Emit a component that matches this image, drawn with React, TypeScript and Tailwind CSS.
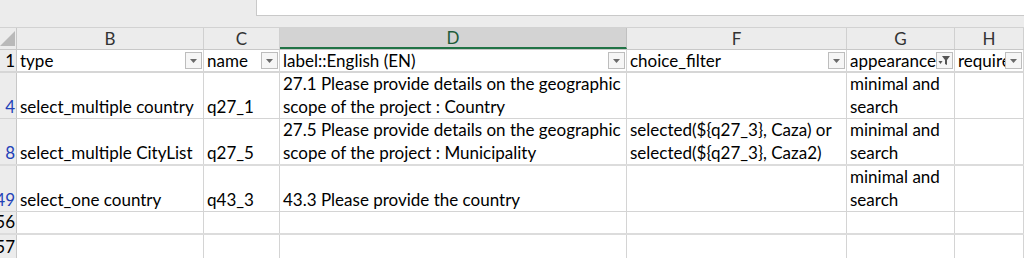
import React from 'react';

// Excel-like sheet with an autofilter header row

const COLS = 'grid grid-cols-[17px_187px_76px_347px_220px_108px_1fr]';

const letters = ['B', 'C', 'D', 'F', 'G', 'H'];

const FilterButton = ({ active = false }: { active?: boolean }) => (
  <span className="absolute right-[1px] bottom-[2px] w-[17px] h-[17px] bg-[#f6f6f6] border border-[#bdbdbd] flex items-center justify-center">
    {active ? (
      <svg width="13" height="11" viewBox="0 0 13 11">
        <path d="M4 1h8L9 5v5L7 9V5z" fill="#555" />
        <path d="M0.5 6h4L2.5 9z" fill="#555" />
      </svg>
    ) : (
      <svg width="7" height="4" viewBox="0 0 7 4">
        <path d="M0 0h7L3.5 4z" fill="#6a6a6a" />
      </svg>
    )}
  </span>
);

type Row = {
  num: string;
  blue?: boolean;
  h: string;
  line: string;
  cells: string[][];
};

const rows: Row[] = [
  {
    num: '4',
    blue: true,
    h: 'h-[46px]',
    line: 'border-b border-[#d4d4d4]',
    cells: [
      ['select_multiple country'],
      ['q27_1'],
      ['27.1 Please provide details on the geographic', 'scope of the project : Country'],
      [],
      ['minimal and', 'search'],
      [],
    ],
  },
  {
    num: '8',
    blue: true,
    h: 'h-[47px]',
    line: 'border-b-2 border-[#dcdcdc]',
    cells: [
      ['select_multiple CityList'],
      ['q27_5'],
      ['27.5 Please provide details on the geographic', 'scope of the project : Municipality'],
      ['selected(${q27_3}, Caza) or', 'selected(${q27_3}, Caza2)'],
      ['minimal and', 'search'],
      [],
    ],
  },
  {
    num: '49',
    blue: true,
    h: 'h-[46px]',
    line: 'border-b border-[#d4d4d4]',
    cells: [
      ['select_one country'],
      ['q43_3'],
      ['43.3 Please provide the country'],
      [],
      ['minimal and', 'search'],
      [],
    ],
  },
  {
    num: '56',
    h: 'h-[23px]',
    line: 'border-b-2 border-[#dcdcdc]',
    cells: [[], [], [], [], [], []],
  },
  {
    num: '57',
    h: 'h-[24px]',
    line: 'border-b border-[#d4d4d4]',
    cells: [[], [], [], [], [], []],
  },
];

const headers = ['type', 'name', 'label::English (EN)', 'choice_filter', 'appearance', 'required'];

export default function App() {
  return (
    <div className="w-[1024px] h-[258px] overflow-hidden bg-white font-['Lato',sans-serif] text-[17px] text-black">
      {/* Formula bar strip */}
      <div className="h-[28px] bg-[#ececec] border-b border-[#d2d2d2] flex">
        <div className="w-[256px]" />
        <div className="flex-1 h-[16px] bg-white border-l border-b border-[#c9c9c9]" />
      </div>

      {/* Column letters */}
      <div className={`${COLS} h-[22px] bg-[#ececec] border-b border-[#c8c8c8] text-[#333]`}>
        <div className="relative border-r border-[#c8c8c8]">
          <svg className="absolute left-0 bottom-[3px]" width="15" height="15" viewBox="0 0 15 15">
            <path d="M15 0V15H0z" fill="#b9b9b9" />
          </svg>
        </div>
        {letters.map((l) => (
          <div
            key={l}
            className={
              l === 'D'
                ? 'flex items-center justify-center bg-[#d3d3d3] border-r border-[#c0c0c0] border-b-2 border-b-[#217346] text-[#1d5c3a] leading-none'
                : 'flex items-center justify-center border-r border-[#d0d0d0] leading-none'
            }
          >
            {l}
          </div>
        ))}
      </div>

      {/* Header row 1 */}
      <div className={`${COLS} h-[23px] border-b-2 border-[#d6d6d6]`}>
        <div className="bg-[#ececec] border-r border-[#c8c8c8] flex items-center justify-end pr-[1px] leading-none">1</div>
        {headers.map((t, i) => (
          <div key={t} className="relative border-r border-[#d4d4d4] pl-[3px] leading-[22px] whitespace-nowrap overflow-hidden">
            {t}
            <FilterButton active={i === 4} />
          </div>
        ))}
      </div>

      {/* Data rows */}
      {rows.map((r) => (
        <div key={r.num} className={`${COLS} ${r.h} ${r.line}`}>
          <div
            className={`bg-[#ececec] border-r border-[#c8c8c8] flex items-end justify-end pr-[1px] leading-[22px] whitespace-nowrap overflow-hidden ${
              r.blue ? 'text-[#2342b8]' : 'text-black'
            }`}
          >
            {r.num}
          </div>
          {r.cells.map((lines, i) => (
            <div key={i} className="border-r border-[#d4d4d4] pl-[3px] flex flex-col justify-end leading-[23px] whitespace-nowrap overflow-hidden">
              {lines.map((ln) => (
                <span key={ln}>{ln}</span>
              ))}
            </div>
          ))}
        </div>
      ))}
    </div>
  );
}
